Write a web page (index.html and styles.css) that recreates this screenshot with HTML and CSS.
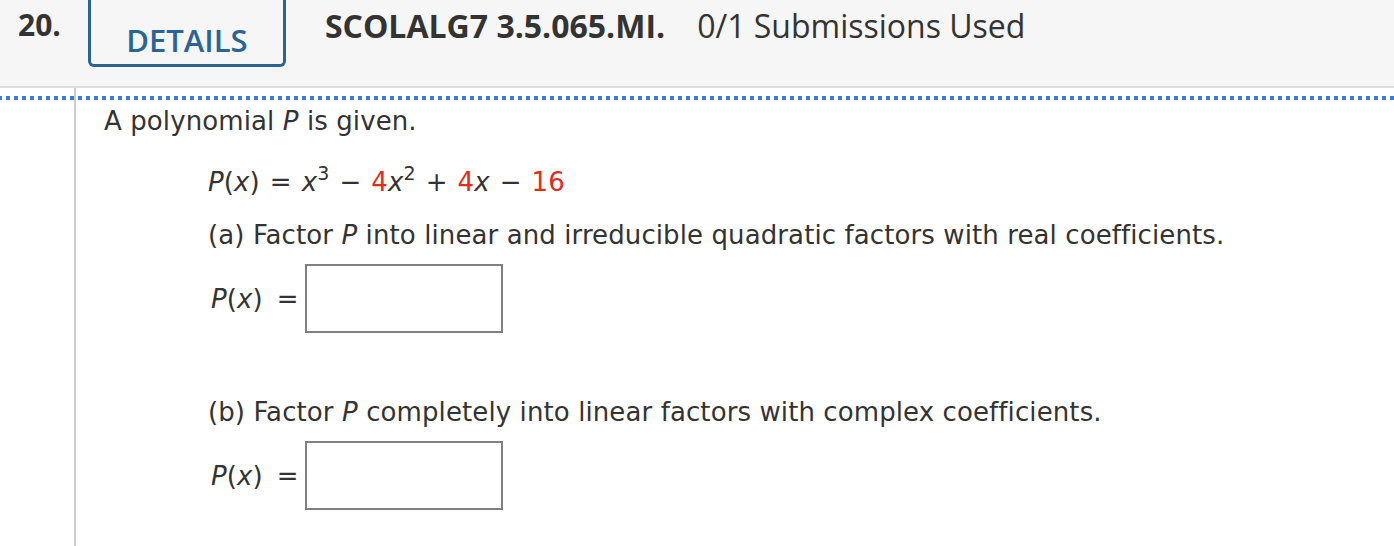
FILE: index.html
```html
<!DOCTYPE html>
<html>
<head>
<meta charset="utf-8">
<link rel="stylesheet" href="styles.css">
</head>
<body>
<header class="qhead">
  <span class="qnum">20.</span>
  <div class="details">DETAILS</div>
  <span class="qcode">SCOLALG7 3.5.065.MI.</span>
  <span class="qsub">0/1 Submissions Used</span>
</header>
<main class="qbody">
  <div class="dots"></div>
  <p class="intro">A polynomial <i>P</i> is given.</p>
  <div class="indent">
    <p class="eq"><i>P</i>(<i>x</i>)<span class="op">=</span><i>x</i><sup>3</sup><span class="op">−</span><span class="red">4</span><i>x</i><sup>2</sup><span class="op">+</span><span class="red">4</span><i>x</i><span class="op">−</span><span class="red">16</span></p>
    <p class="part">(a) Factor <i>P</i> into linear and irreducible quadratic factors with real coefficients.</p>
    <div class="answer"><span class="lhs"><i>P</i>(<i>x</i>)</span><span class="eqs">=</span><span class="box"></span></div>
    <p class="part part-b">(b) Factor <i>P</i> completely into linear factors with complex coefficients.</p>
    <div class="answer"><span class="lhs"><i>P</i>(<i>x</i>)</span><span class="eqs">=</span><span class="box"></span></div>
  </div>
</main>
</body>
</html>
```
FILE: styles.css
```css
html, body {
  margin: 0;
  padding: 0;
  background: #ffffff;
  height: 100%;
}
body {
  color: #333333;
  font-family: "DejaVu Sans", Verdana, sans-serif;
  overflow: hidden;
}
.qhead {
  display: flex;
  align-items: flex-start;
  height: 86px;
  background: #f6f6f6;
  border-bottom: 2px solid #dddddd;
  font-family: "Open Sans", sans-serif;
  color: #333333;
}
.qnum {
  font-size: 30px;
  font-weight: 700;
  line-height: 40px;
  margin: 5px 0 0 18px;
}
.details {
  box-sizing: border-box;
  width: 198px;
  height: 67px;
  margin-left: 27px;
  border: 3px solid #2a6496;
  border-top: none;
  border-radius: 0 0 6px 6px;
  color: #2a6496;
  font-size: 31px;
  font-weight: 600;
  line-height: 40px;
  padding-top: 20px;
  text-align: center;
}
.qcode {
  font-size: 32px;
  font-weight: 700;
  line-height: 40px;
  margin: 6px 0 0 39px;
}
.qsub {
  font-size: 32px;
  font-weight: 400;
  line-height: 40px;
  margin: 6px 0 0 32px;
}
.qbody {
  margin-left: 74px;
  border-left: 2px solid #cccccc;
  height: 458px;
  padding-top: 8px;
  padding-left: 28px;
  box-sizing: border-box;
}
.dots {
  height: 4px;
  margin-left: -106px;
  background: repeating-linear-gradient(to right, #3a7bd5 0 4px, transparent 4px 8px);
}
p {
  margin: 0;
}
.intro {
  font-size: 26px;
  line-height: 30px;
  margin-top: 6px;
  letter-spacing: 0.1px;
}
.indent {
  padding-left: 104px;
  font-size: 26px;
  line-height: 30px;
  letter-spacing: 0.1px;
}
.eq {
  margin-top: 31px;
}
.op {
  margin: 0 10px;
}
.eq sup {
  font-size: 19px;
  line-height: 0;
  vertical-align: 11px;
}
.red {
  color: #e62a1e;
}
.part {
  margin-top: 23px;
}
.part-b {
  margin-top: 64px;
}
.answer {
  display: flex;
  align-items: center;
  margin-top: 14px;
}
.lhs {
  padding-left: 3px;
}
.eqs {
  margin-left: 14px;
  margin-right: 6px;
}
.box {
  width: 198px;
  height: 69px;
  box-sizing: border-box;
  border: 2px solid #808080;
  background: #fff;
}
```
